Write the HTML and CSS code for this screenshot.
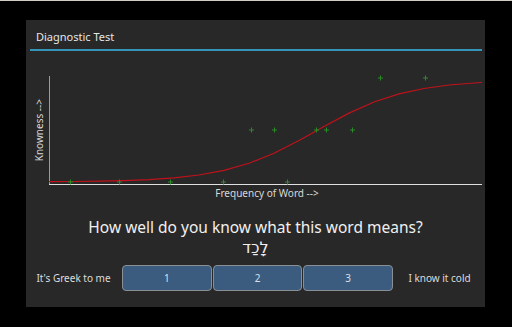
FILE: index.html
```html
<!DOCTYPE html>
<html lang="en">
<head>
    <meta charset="UTF-8">
    <meta name="viewport" content="width=device-width, initial-scale=1.0">
    <title>Diagnostic Test</title>
    <link rel="stylesheet" href="styles.css">
</head>
<body>
    <div class="dialog">
        <div class="dialog-title">Diagnostic Test</div>
        <div class="title-rule"></div>

        <div class="chart-row">
            <div class="y-label">Knowness --&gt;</div>
            <svg class="plot" width="434" height="110" viewBox="0 0 434 110">
                <line x1="0.5" y1="1" x2="0.5" y2="110" class="axis-y"/>
                <line x1="0" y1="109.5" x2="433" y2="109.5" class="axis-x"/>
                <polyline class="fit" points="0,106.7 25,106.5 50,106.2 75,105.6 100,104.6 125,102.8 150,100 175,95.3 200,88.3 225,78.2 250,65.5 267,56 275,51.5 300,38.1 325,27 350,18.9 375,13.5 400,10 425,8 433,7.5"/>
                <g class="points">
                    <path d="M19 107h5M21.5 104.5v5"/>
                    <path d="M68 107h5M70.5 104.5v5"/>
                    <path d="M119 107h5M121.5 104.5v5"/>
                    <path d="M172 107h5M174.5 104.5v5"/>
                    <path d="M236 107h5M238.5 104.5v5"/>
                    <path d="M200 55h5M202.5 52.5v5"/>
                    <path d="M223 55h5M225.5 52.5v5"/>
                    <path d="M265 55h5M267.5 52.5v5"/>
                    <path d="M275 55h5M277.5 52.5v5"/>
                    <path d="M301 55h5M303.5 52.5v5"/>
                    <path d="M329 3h5M331.5 0.5v5"/>
                    <path d="M374 3h5M376.5 0.5v5"/>
                </g>
            </svg>
        </div>
        <div class="x-label">Frequency of Word --&gt;</div>

        <div class="question">How well do you know what this word means?</div>
        <div class="word" lang="he" dir="rtl">לָכַד</div>

        <div class="answer-row">
            <span class="answer-end">It's Greek to me</span>
            <button class="answer-btn">1</button>
            <button class="answer-btn">2</button>
            <button class="answer-btn">3</button>
            <span class="answer-end">I know it cold</span>
        </div>
    </div>
</body>
</html>
```

FILE: styles.css
```css
* {
    padding: 0;
    margin: 0;
    box-sizing: border-box;
    font-family: "Noto Sans", "DejaVu Sans", sans-serif;
}
body {
    background: #000;
    border-top: 1px solid #d4cdc4;
    height: 327px;
    overflow: hidden;
}
.dialog {
    width: 459px;
    height: 287px;
    margin: 19px 0 0 26px;
    background: #282828;
}
.dialog-title {
    height: 29px;
    padding: 9px 0 0 10px;
    font-size: 11px;
    line-height: 15px;
    color: #e6e6e6;
}
.title-rule {
    height: 2px;
    margin: 0 3px 0 4px;
    background: #3594b8;
}
.chart-row {
    display: flex;
    align-items: center;
    margin-top: 24px;
}
.y-label {
    width: 23px;
    padding-right: 7px;
    font-size: 10px;
    line-height: 13px;
    color: #d8d8d8;
    writing-mode: vertical-rl;
    transform: rotate(180deg);
    white-space: nowrap;
    text-align: center;
}
.plot {
    display: block;
    overflow: visible;
}
.axis-y {
    stroke: #9a9a9a;
    stroke-width: 1;
}
.axis-x {
    stroke: #e0e0e0;
    stroke-width: 1.2;
}
.fit {
    fill: none;
    stroke: #c0121a;
    stroke-width: 1.2;
}
.points path {
    stroke: #2a8a2a;
    stroke-width: 1;
}
.x-label {
    margin: 1px 0 0 23px;
    text-align: center;
    font-size: 10px;
    line-height: 14px;
    color: #d8d8d8;
}
.question {
    margin-top: 18px;
    text-align: center;
    font-size: 15.5px;
    line-height: 18px;
    color: #f0f0f0;
}
.word {
    margin-top: 3px;
    text-align: center;
    font-family: "DejaVu Sans", sans-serif;
    font-size: 16px;
    line-height: 17px;
    color: #f0f0f0;
}
.answer-row {
    display: flex;
    align-items: center;
    gap: 1px;
    margin-top: 9px;
}
.answer-end {
    width: 95px;
    text-align: center;
    font-size: 10px;
    color: #dcdcdc;
    white-space: nowrap;
}
.answer-row .answer-end:last-child {
    flex: 1;
}
.answer-btn {
    width: 89.7px;
    height: 26px;
    background: #3b5c7e;
    border: 1px solid #8a8f96;
    border-radius: 4px;
    color: #d4e0ec;
    font-size: 10px;
}
```
